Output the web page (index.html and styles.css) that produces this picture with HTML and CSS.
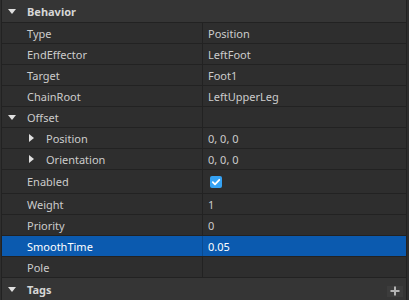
FILE: index.html
```html
<!DOCTYPE html>
<html lang="en">
<head>
    <meta charset="UTF-8">
    <title>Properties</title>
    <link rel="stylesheet" href="styles.css">
</head>
<body>
    <div class="panel">
        <div class="section">
            <span class="arrow-down"></span>
            <span class="section-title">Behavior</span>
        </div>
        <div class="row">
            <div class="label">Type</div>
            <div class="value">Position</div>
        </div>
        <div class="row">
            <div class="label">EndEffector</div>
            <div class="value">LeftFoot</div>
        </div>
        <div class="row">
            <div class="label">Target</div>
            <div class="value">Foot1</div>
        </div>
        <div class="row">
            <div class="label">ChainRoot</div>
            <div class="value">LeftUpperLeg</div>
        </div>
        <div class="row">
            <div class="label group"><span class="arrow-down small"></span>Offset</div>
            <div class="value"></div>
        </div>
        <div class="row">
            <div class="label sub"><span class="arrow-right"></span>Position</div>
            <div class="value">0, 0, 0</div>
        </div>
        <div class="row">
            <div class="label sub"><span class="arrow-right"></span>Orientation</div>
            <div class="value">0, 0, 0</div>
        </div>
        <div class="row tall">
            <div class="label">Enabled</div>
            <div class="value">
                <span class="checkbox">
                    <svg width="12" height="12" viewBox="0 0 12 12">
                        <path d="M2.8 6.2 L5 8.3 L9.3 3.8" fill="none" stroke="#ffffff" stroke-width="1.8" stroke-linecap="round" stroke-linejoin="round"/>
                    </svg>
                </span>
            </div>
        </div>
        <div class="row">
            <div class="label">Weight</div>
            <div class="value">1</div>
        </div>
        <div class="row">
            <div class="label">Priority</div>
            <div class="value">0</div>
        </div>
        <div class="row selected">
            <div class="label">SmoothTime</div>
            <div class="value">0.05</div>
        </div>
        <div class="row">
            <div class="label">Pole</div>
            <div class="value"></div>
        </div>
        <div class="section">
            <span class="arrow-down"></span>
            <span class="section-title">Tags</span>
            <span class="add-btn">
                <svg width="10" height="10" viewBox="0 0 10 10">
                    <path d="M5 0.5 V9.5 M0.5 5 H9.5" stroke="#b4b4b4" stroke-width="2"/>
                </svg>
            </span>
        </div>
    </div>
</body>
</html>
```

FILE: styles.css
```css
body {
    margin: 0;
    background-color: #2e2e2e;
    font-family: 'Noto Sans', sans-serif;
    font-size: 11px;
    color: #cccccc;
    overflow: hidden;
}
.panel {
    width: 404px;
    margin-left: 1px;
    border-left: 1px solid #222222;
    border-right: 1px solid #222222;
    height: 300px;
}
.section {
    display: flex;
    align-items: center;
    height: 22px;
    border-bottom: 1px solid #222222;
    background-color: #353535;
}
.section-title {
    font-weight: bold;
    color: #d6d6d6;
}
.arrow-down {
    width: 0;
    height: 0;
    border-left: 4px solid transparent;
    border-right: 4px solid transparent;
    border-top: 5px solid #e0e0e0;
    margin-left: 6px;
    margin-right: 11px;
}
.arrow-down.small {
    margin-left: 6px;
    margin-right: 11px;
}
.arrow-right {
    width: 0;
    height: 0;
    border-top: 4px solid transparent;
    border-bottom: 4px solid transparent;
    border-left: 5px solid #e0e0e0;
    margin-left: 27px;
    margin-right: 12px;
}
.row {
    display: grid;
    grid-template-columns: 201px 1fr;
    height: 20px;
    border-bottom: 1px solid #222222;
}
.row.tall {
    height: 23px;
}
.label {
    display: flex;
    align-items: center;
    padding-left: 25px;
    border-right: 1px solid #222222;
}
.label.group,
.label.sub {
    padding-left: 0;
}
.value {
    display: flex;
    align-items: center;
    padding-left: 5px;
}
.selected {
    background-color: #0b5aaf;
    color: #ffffff;
}
.selected .label {
    border-right-color: #0a4a8f;
}
.checkbox {
    display: flex;
    align-items: center;
    justify-content: center;
    width: 12px;
    height: 12px;
    margin-left: 2px;
    border-radius: 2px;
    background-color: #35a2f4;
}
.add-btn {
    display: flex;
    align-items: center;
    justify-content: center;
    width: 16px;
    height: 11px;
    margin-left: auto;
    margin-right: 3px;
    margin-top: 4px;
    background-color: #3c3c3c;
}
```
